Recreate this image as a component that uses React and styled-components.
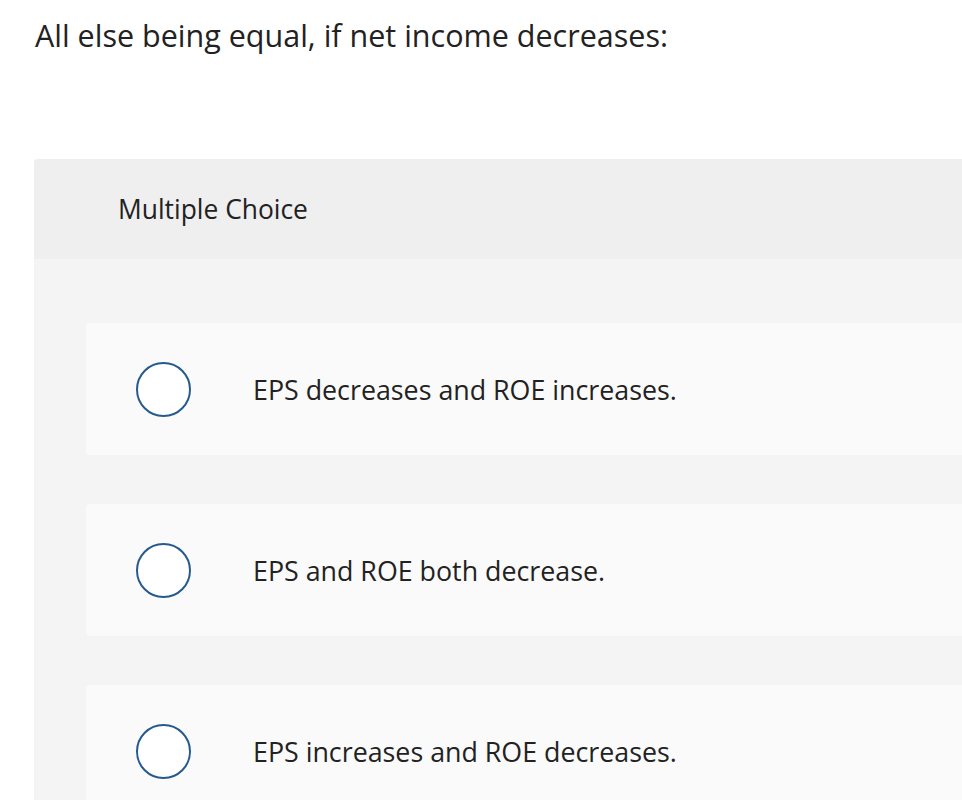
import React from 'react'
import styled, { createGlobalStyle } from 'styled-components'

const GlobalStyle = createGlobalStyle`
  html, body {
    margin: 0;
    padding: 0;
    background: #fff;
    overflow: hidden;
  }
  body {
    font-family: "Open Sans", "Liberation Sans", Arial, sans-serif;
    color: #222;
  }
`

const Page = styled.main`
  padding: 0 0 0 34px;
  width: 1100px;
`

const Prompt = styled.h1`
  margin: 0;
  padding: 14px 0 0 1px;
  font-size: 30.5px;
  line-height: 42px;
  font-weight: 400;
  color: #222;
`

const Panel = styled.section`
  margin-top: 103px;
  width: 1000px;
  background: #f4f4f4;
  border-radius: 4px 0 0 0;
  overflow: hidden;
`

const PanelHeader = styled.header`
  height: 100px;
  display: flex;
  align-items: center;
  padding-left: 84px;
  background: #efefef;
  font-size: 26.4px;
  color: #222;
`

const Options = styled.ul`
  list-style: none;
  margin: 0;
  padding: 64px 0 40px 52px;
  display: flex;
  flex-direction: column;
  gap: 49px;
`

const Option = styled.li`
  height: 132px;
  display: flex;
  align-items: center;
  gap: 62px;
  padding-left: 50px;
  background: #fafafa;
  border-radius: 4px 0 0 4px;
  font-size: 26.8px;
  color: #222;
`

const Radio = styled.span`
  box-sizing: border-box;
  width: 55px;
  height: 55px;
  flex: none;
  border-radius: 50%;
  border: 2px solid #255a8e;
  background: #fff;
`

const Label = styled.span`
  padding-top: 1px;
`

const choices = [
  'EPS decreases and ROE increases.',
  'EPS and ROE both decrease.',
  'EPS increases and ROE decreases.',
]

export default function App() {
  return (
    <Page>
      <GlobalStyle />
      <Prompt>All else being equal, if net income decreases:</Prompt>
      <Panel>
        <PanelHeader>Multiple Choice</PanelHeader>
        <Options>
          {choices.map((c, i) => (
            <Option key={i}>
              <Radio />
              <Label>{c}</Label>
            </Option>
          ))}
        </Options>
      </Panel>
    </Page>
  )
}
